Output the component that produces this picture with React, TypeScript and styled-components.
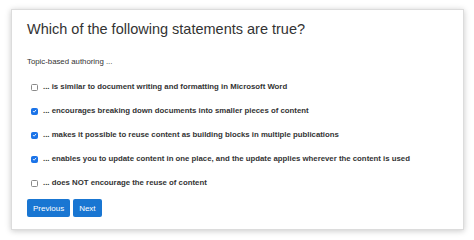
import React from "react";
import styled, { createGlobalStyle } from "styled-components";

const Global = createGlobalStyle`
  html, body { margin: 0; padding: 0; background: #ffffff; }
  body { font-family: "Liberation Sans", Arial, sans-serif; }
`;

const Page = styled.div`
  width: 474px;
  height: 240px;
  padding: 9px 10px 0 11px;
  box-sizing: border-box;
`;

const Card = styled.div`
  width: 453px;
  height: 221px;
  box-sizing: border-box;
  background: #fff;
  border: 1px solid #dcdcdc;
  box-shadow: 0 1px 6px rgba(0, 0, 0, 0.22);
  padding: 9px 16px 0 15px;
  display: flex;
  flex-direction: column;
`;

const Title = styled.h1`
  margin: 0;
  font-size: 14.5px;
  font-weight: 400;
  color: #333;
  line-height: 20px;
`;

const Lead = styled.p`
  margin: 17px 0 0 0;
  font-size: 7.8px;
  color: #333;
  line-height: 12px;
`;

const Options = styled.div`
  display: flex;
  flex-direction: column;
  gap: 12px;
  margin-top: 13px;
`;

const Option = styled.label`
  display: flex;
  align-items: center;
  gap: 5px;
  padding-left: 4px;
  font-size: 7.8px;
  font-weight: 700;
  color: #333;
  line-height: 12px;
`;

const Box = styled.span<{ $checked: boolean }>`
  width: 7px;
  height: 7px;
  box-sizing: border-box;
  border-radius: 1.5px;
  border: 1px solid ${(p) => (p.$checked ? "#1a73e8" : "#8a8a8a")};
  background: ${(p) => (p.$checked ? "#1a73e8" : "#fff")};
  display: flex;
  align-items: center;
  justify-content: center;
  flex: none;
`;

const Buttons = styled.div`
  display: flex;
  gap: 3px;
  margin-top: 10px;
`;

const Button = styled.button`
  height: 18px;
  padding: 0 6px;
  border: none;
  border-radius: 2px;
  background: #1976d2;
  color: #fff;
  font-family: "Liberation Sans", Arial, sans-serif;
  font-size: 8px;
  font-weight: 400;
`;

const options = [
  { text: "... is similar to document writing and formatting in Microsoft Word", checked: false },
  { text: "... encourages breaking down documents into smaller pieces of content", checked: true },
  { text: "... makes it possible to reuse content as building blocks in multiple publications", checked: true },
  { text: "... enables you to update content in one place, and the update applies wherever the content is used", checked: true },
  { text: "... does NOT encourage the reuse of content", checked: false },
];

export default function App() {
  return (
    <>
      <Global />
      <Page>
        <Card>
          <Title>Which of the following statements are true?</Title>
          <Lead>Topic-based authoring ...</Lead>
          <Options>
            {options.map((o) => (
              <Option key={o.text}>
                <Box $checked={o.checked}>
                  {o.checked && (
                    <svg width="6" height="6" viewBox="0 0 10 10">
                      <path d="M2 5.2 L4.2 7.4 L8.2 2.8" fill="none" stroke="#fff" strokeWidth="1.8" />
                    </svg>
                  )}
                </Box>
                {o.text}
              </Option>
            ))}
          </Options>
          <Buttons>
            <Button>Previous</Button>
            <Button>Next</Button>
          </Buttons>
        </Card>
      </Page>
    </>
  );
}
